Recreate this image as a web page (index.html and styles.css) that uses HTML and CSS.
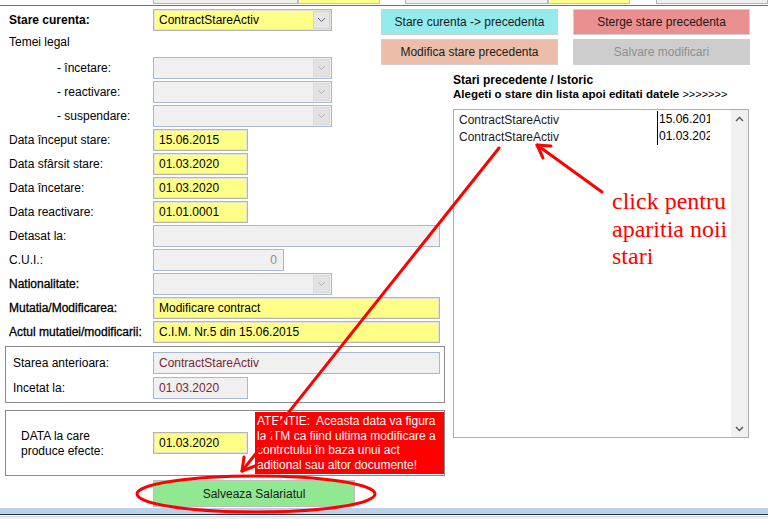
FILE: index.html
```html
<!DOCTYPE html>
<html lang="ro">
<head>
<meta charset="utf-8">
<title>Stare contract</title>
<link rel="stylesheet" href="styles.css">
</head>
<body>
<div class="topstrip">
  <div class="tb tb-gray tb1"></div>
  <div class="tb tb-yellow tb2"></div>
  <div class="tb tb-gray tb3"></div>
  <div class="tb tb-yellow tb4"></div>
  <div class="tb tb-gray tb5"></div>
</div>

<div class="page">
  <div class="form">
    <div class="row">
      <span class="lbl bold">Stare curenta:</span>
      <div class="field sel yellow w-sel"><span class="val">ContractStareActiv</span><span class="drop"><svg width="9" height="6" viewBox="0 0 9 6"><path d="M1 1 L4.5 4.5 L8 1" fill="none" stroke="#666" stroke-width="1"/></svg></span></div>
    </div>
    <div class="row row-title"><span class="lbl">Temei legal</span></div>
    <div class="row">
      <span class="lbl sub">- încetare:</span>
      <div class="field sel dis w-sel"><span class="val"></span><span class="drop drop-dis"><svg width="9" height="6" viewBox="0 0 9 6"><path d="M1 1 L4.5 4.5 L8 1" fill="none" stroke="#b4b4b4" stroke-width="1"/></svg></span></div>
    </div>
    <div class="row">
      <span class="lbl sub">- reactivare:</span>
      <div class="field sel dis w-sel"><span class="val"></span><span class="drop drop-dis"><svg width="9" height="6" viewBox="0 0 9 6"><path d="M1 1 L4.5 4.5 L8 1" fill="none" stroke="#b4b4b4" stroke-width="1"/></svg></span></div>
    </div>
    <div class="row">
      <span class="lbl sub">- suspendare:</span>
      <div class="field sel dis w-sel"><span class="val"></span><span class="drop drop-dis"><svg width="9" height="6" viewBox="0 0 9 6"><path d="M1 1 L4.5 4.5 L8 1" fill="none" stroke="#b4b4b4" stroke-width="1"/></svg></span></div>
    </div>
    <div class="row"><span class="lbl">Data început stare:</span><div class="field yellow w-date">15.06.2015</div></div>
    <div class="row"><span class="lbl">Data sfârsit stare:</span><div class="field yellow w-date">01.03.2020</div></div>
    <div class="row"><span class="lbl">Data încetare:</span><div class="field yellow w-date">01.03.2020</div></div>
    <div class="row"><span class="lbl">Data reactivare:</span><div class="field yellow w-date">01.01.0001</div></div>
    <div class="row"><span class="lbl">Detasat la:</span><div class="field dis w-long"></div></div>
    <div class="row"><span class="lbl">C.U.I.:</span><div class="field dis w-cui num">0</div></div>
    <div class="row">
      <span class="lbl heavy">Nationalitate:</span>
      <div class="field sel dis w-sel"><span class="val"></span><span class="drop drop-dis"><svg width="9" height="6" viewBox="0 0 9 6"><path d="M1 1 L4.5 4.5 L8 1" fill="none" stroke="#b4b4b4" stroke-width="1"/></svg></span></div>
    </div>
    <div class="row"><span class="lbl heavy">Mutatia/Modificarea:</span><div class="field yellow w-long">Modificare contract</div></div>
    <div class="row"><span class="lbl heavy">Actul mutatiei/modificarii:</span><div class="field yellow w-long">C.I.M. Nr.5 din 15.06.2015</div></div>

    <div class="group group1">
      <div class="row"><span class="lbl">Starea anterioara:</span><div class="field dis w-long maroon">ContractStareActiv</div></div>
      <div class="row"><span class="lbl">Incetat la:</span><div class="field dis w-date maroon">01.03.2020</div></div>
    </div>

    <div class="group group2">
      <span class="lbl lbl2">DATA la care<br>produce efecte:</span>
      <div class="field yellow w-date">01.03.2020</div>
      <div class="rednote">ATENTIE:&nbsp; Aceasta data va figura<br>la ITM ca fiind ultima modificare a<br>contrctului în baza unui act<br>aditional sau altor documente!</div>
    </div>

    <div class="saverow"><div class="btn save">Salveaza Salariatul</div></div>
  </div>

  <div class="actions">
    <div class="btn b-cyan">Stare curenta -&gt; precedenta</div>
    <div class="btn b-red">Sterge stare precedenta</div>
    <div class="btn b-salmon">Modifica stare precedenta</div>
    <div class="btn b-gray">Salvare modificari</div>
  </div>

  <div class="history">
    <div class="h-title">Stari precedente / Istoric</div>
    <div class="h-sub">Alegeti o stare din lista apoi editati datele <span class="arrows">&gt;&gt;&gt;&gt;&gt;&gt;&gt;</span></div>
    <div class="list">
      <div class="list-body">
        <div class="lrow"><span class="lc1">ContractStareActiv</span><span class="lc2">15.06.2015</span></div>
        <div class="lrow"><span class="lc1">ContractStareActiv</span><span class="lc2">01.03.2020</span></div>
      </div>
      <div class="scroll">
        <svg width="9" height="6" viewBox="0 0 9 6"><path d="M1 5 L4.5 1.5 L8 5" fill="none" stroke="#555" stroke-width="1.4"/></svg>
        <svg width="9" height="6" viewBox="0 0 9 6"><path d="M1 1 L4.5 4.5 L8 1" fill="none" stroke="#555" stroke-width="1.4"/></svg>
      </div>
    </div>
  </div>
</div>

<div class="statusbar"></div>
<div class="statusbase"></div>

<svg class="annot" width="768" height="519" viewBox="0 0 768 519">
  <g stroke="#ff0000" stroke-width="3" fill="none" stroke-linecap="round" stroke-linejoin="round">
    <path d="M602 192 L537 145"/>
    <path d="M543 158 L537 145 L551 146"/>
    <path d="M499 148 L242 471"/>
    <path d="M244 457 L242 471 L255 466"/>
    <ellipse cx="256" cy="494" rx="119" ry="18"/>
  </g>
</svg>
<div class="annot-text">click pentru<br>aparitia noii<br>stari</div>
</body>
</html>
```

FILE: styles.css
```css
html, body {
  margin: 0;
  padding: 0;
}
body {
  font-family: "Liberation Sans", Arial, sans-serif;
  font-size: 12px;
  color: #000;
  background: #fff;
  width: 768px;
  height: 519px;
  overflow: hidden;
  position: relative;
}

/* top cut-off controls */
.topstrip {
  display: flex;
  height: 5px;
  padding-left: 153px;
  border-bottom: 1px solid #6f6f6f;
  overflow: hidden;
}
.tb {
  height: 4px;
  box-sizing: border-box;
  border: 1px solid #a9b7c9;
  border-top: none;
  flex: none;
}
.tb-gray { background: #efefef; }
.tb-yellow { background: #ffff88; border-color: #c4c4c4; }
.tb1 { width: 145px; }
.tb2 { width: 82px; }
.tb3 { width: 143px; margin-left: 25px; }
.tb4 { width: 82px; }
.tb5 { flex: 1; margin-left: 26px; }

/* page grid */
.page {
  display: grid;
  grid-template-columns: 376px 64px 8px 297px;
  grid-template-rows: auto 1fr;
  padding-left: 5px;
}
.form {
  grid-column: 1 / 3;
  grid-row: 1 / 3;
  display: flex;
  flex-direction: column;
  gap: 2px;
  padding-top: 3px;
  width: 440px;
}
.row {
  display: flex;
  align-items: center;
  height: 22px;
  padding-left: 4px;
  flex: none;
}
.row-title {
  align-items: flex-start;
  padding-top: 2px;
  box-sizing: border-box;
}
.lbl {
  width: 144px;
  flex: none;
  white-space: nowrap;
}
.bold { font-weight: bold; }
.heavy { -webkit-text-stroke: 0.3px #000; }
.sub { padding-left: 48px; box-sizing: border-box; }

.field {
  height: 22px;
  box-sizing: border-box;
  border: 1px solid #b5b5b5;
  display: flex;
  align-items: center;
  padding-left: 5px;
  white-space: nowrap;
  overflow: hidden;
  flex: none;
}
.yellow {
  background: #ffff88;
  box-shadow: inset 0 0 0 1px #e4e4d0;
}
.dis {
  background: #f0f0f0;
  border-color: #a8b9cf;
}
.w-date { width: 95px; }
.w-sel { width: 179px; }
.w-long { width: 287px; }
.w-cui { width: 131px; }
.num {
  justify-content: flex-end;
  padding-right: 6px;
  color: #8c8c8c;
}
.maroon { color: #7b2434; }

.sel { padding-right: 1px; }
.sel .val { flex: 1; }
.drop {
  width: 17px;
  height: 18px;
  display: flex;
  align-items: center;
  justify-content: center;
  background: #e6e6e6;
  border: 1px solid #d4d4d4;
  box-sizing: border-box;
}
.drop-dis {
  background: #e2e2e2;
  border-color: #dadada;
}

/* framed groups */
.group {
  border: 1px solid #8a8a8a;
  width: 440px;
  box-sizing: border-box;
  flex: none;
}
.group1 {
  margin-top: 1px;
  padding: 5px 0 3px 7px;
  display: flex;
  flex-direction: column;
  gap: 3px;
}
.group1 .row { padding-left: 0; }
.group1 .lbl { width: 140px; }
.group2 {
  margin-top: 5px;
  display: flex;
  align-items: center;
  padding: 1px 0 1px 15px;
}
.lbl2 {
  width: 132px;
  line-height: 15px;
  padding-top: 2px;
}
.rednote {
  background: #ff0000;
  color: #fff;
  width: 189px;
  height: 62px;
  margin-left: 7px;
  padding: 2px 0 0 2px;
  box-sizing: border-box;
  line-height: 14.7px;
  white-space: nowrap;
  overflow: hidden;
}

.saverow {
  margin-top: 2px;
  padding-left: 148px;
}

/* buttons */
.btn {
  height: 26px;
  box-sizing: border-box;
  border: 1px solid #d0d0d0;
  display: flex;
  align-items: center;
  justify-content: center;
  color: #1a1a1a;
  white-space: nowrap;
}
.save {
  width: 202px;
  height: 27px;
  background: #90e890;
  border-color: #bdbdbd;
}
.actions {
  grid-column: 2 / 5;
  grid-row: 1;
  align-self: start;
  display: grid;
  grid-template-columns: 177px 177px;
  column-gap: 15px;
  row-gap: 4px;
  margin-top: 3px;
}
.b-cyan { background: #93ebeb; }
.b-red { background: #eb9090; }
.b-salmon { background: #ecbea9; }
.b-gray { background: #cdcdcd; color: #8f8f8f; }

/* history */
.history {
  grid-column: 4;
  grid-row: 2;
  padding-top: 8px;
}
.h-title {
  font-weight: bold;
  line-height: 14px;
  white-space: nowrap;
}
.h-sub {
  font-weight: bold;
  font-size: 11.5px;
  line-height: 14px;
  white-space: nowrap;
}
.arrows {
  font-weight: normal;
  font-size: 11px;
}
.list {
  margin-top: 8px;
  width: 296px;
  height: 329px;
  box-sizing: border-box;
  border: 1px solid #adadad;
  display: flex;
}
.list-body {
  flex: 1;
  padding-top: 1px;
}
.lrow {
  display: flex;
  height: 17px;
  align-items: center;
}
.lc1 {
  width: 203px;
  padding-left: 5px;
  box-sizing: border-box;
  color: #1a1a1a;
}
.lc2 {
  width: 53px;
  height: 17px;
  line-height: 17px;
  border-left: 1px solid #000;
  padding-left: 1px;
  box-sizing: border-box;
  overflow: hidden;
  white-space: nowrap;
}
.scroll {
  width: 17px;
  background: #f0f0f0;
  display: flex;
  flex-direction: column;
  justify-content: space-between;
  align-items: center;
  padding: 6px 0 5px;
  box-sizing: border-box;
}

/* bottom bar */
.statusbar {
  margin-top: 1px;
  height: 6px;
  background: #b9d1ea;
  border-bottom: 1px solid #1d3340;
}
.statusbase {
  margin-top: 1px;
  height: 10px;
  border-top: 1px solid #d8d8d8;
  background: #f0f0f0;
}

/* annotations drawn over the form */
.annot {
  position: absolute;
  left: 0;
  top: 0;
  pointer-events: none;
}
.annot-text {
  position: absolute;
  left: 612px;
  top: 188px;
  font-family: "Liberation Serif", "Times New Roman", serif;
  font-size: 24px;
  line-height: 27.5px;
  color: #ff0000;
  white-space: nowrap;
  pointer-events: none;
}
```
